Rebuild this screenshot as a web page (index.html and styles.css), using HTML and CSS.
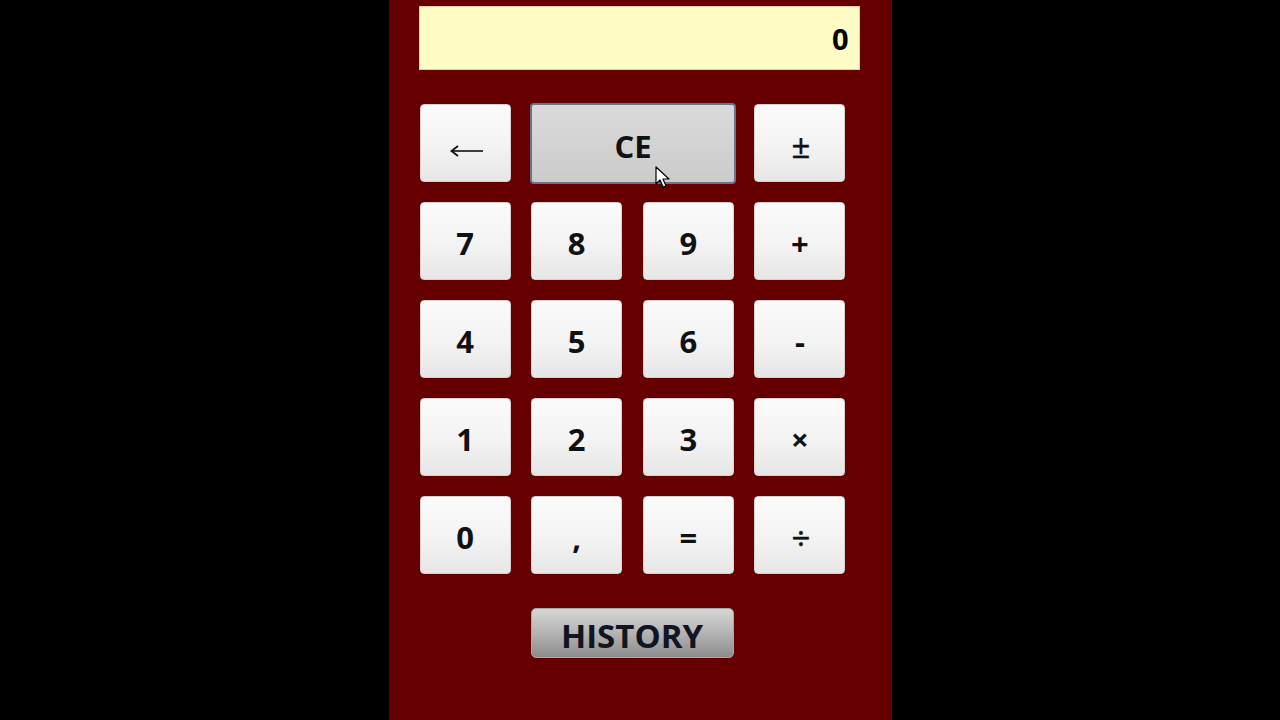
FILE: index.html
```html
<!DOCTYPE html>
<html lang="en">
<head>
    <meta charset="UTF-8">
    <meta name="viewport" content="width=device-width, initial-scale=1.0">
    <title>Calculator</title>
    <link rel="stylesheet" href="styles.css">
</head>
<body>

    <!-- Calculator Panel -->
    <div class="calc">
        <!-- Display -->
        <div class="display" id="display">0</div>

        <!-- Keypad -->
        <div class="keypad">
            <button class="key key-arrow" aria-label="Backspace">
                <svg width="34" height="12" viewBox="0 0 34 12">
                    <path d="M2 6 H33" stroke="#111" stroke-width="1.6"/>
                    <path d="M8 1 L1.5 6 L8 11" fill="none" stroke="#111" stroke-width="1.8" stroke-linejoin="miter"/>
                </svg>
            </button>
            <button class="key key-wide hover">CE
                <svg class="cursor" width="16" height="24" viewBox="0 0 16 24">
                    <path d="M1 1 L1 18 L5 14 L8 21 L11 20 L8 13 L14 13 Z" fill="#fff" stroke="#000" stroke-width="1.2" stroke-linejoin="round"/>
                </svg>
            </button>
            <button class="key key-sym">&plusmn;</button>

            <button class="key">7</button>
            <button class="key">8</button>
            <button class="key">9</button>
            <button class="key">+</button>

            <button class="key">4</button>
            <button class="key">5</button>
            <button class="key">6</button>
            <button class="key">-</button>

            <button class="key">1</button>
            <button class="key">2</button>
            <button class="key">3</button>
            <button class="key">&times;</button>

            <button class="key">0</button>
            <button class="key">,</button>
            <button class="key">=</button>
            <button class="key key-sym">&divide;</button>
        </div>

        <!-- History Button -->
        <div class="history-row">
            <button class="history-btn">HISTORY</button>
        </div>
    </div>

</body>
</html>
```

FILE: styles.css
```css
/* Page */
body {
    margin: 0;
    background-color: #000;
    display: flex;
    justify-content: center;
    height: 720px;
    overflow: hidden;
    font-family: "Open Sans", "Noto Sans", Arial, sans-serif;
}

/* Calculator Panel */
.calc {
    width: 503px;
    height: 720px;
    box-sizing: border-box;
    background-color: #660000;
    padding: 6px 0 0 30px;
}

/* Display */
.display {
    width: 441px;
    height: 64px;
    box-sizing: border-box;
    background-color: #fffcc6;
    border: 1px solid #e8c8b8;
    text-align: right;
    padding-right: 10px;
    font-size: 29px;
    font-weight: bold;
    line-height: 64px;
    color: #000;
}

/* Keypad */
.keypad {
    display: grid;
    grid-template-columns: repeat(4, 91px);
    grid-auto-rows: 78px;
    column-gap: 20.67px;
    row-gap: 20px;
    margin-top: 34px;
    margin-left: 1px;
}

.key {
    position: relative;
    border: 1px solid #d8d0d0;
    border-radius: 4px;
    background: linear-gradient(to bottom, #fbfbfb 0%, #f3f3f3 55%, #e6e6e6 100%);
    font-family: inherit;
    font-size: 31px;
    font-weight: bold;
    color: #111;
    padding: 4px 0 0;
    cursor: pointer;
}

.key-wide {
    grid-column: span 2;
}

.key-arrow {
    padding: 4px 0 0 3px;
}

.key-sym {
    font-weight: normal;
    font-size: 33px;
    padding-left: 2px;
    -webkit-text-stroke: 0.4px #111;
}

.key.hover {
    margin: -1px -2px -2px -1px;
    border: 2px solid #6a7488;
    background: linear-gradient(to bottom, #dadada 0%, #d3d3d3 50%, #cbcbcb 100%);
}

/* Mouse pointer resting on the CE key */
.cursor {
    position: absolute;
    left: 123px;
    top: 61px;
}

/* History Button */
.history-row {
    width: 441px;
    display: flex;
    padding-left: 112px;
    box-sizing: border-box;
    margin-top: 34px;
}

.history-btn {
    width: 203px;
    height: 50px;
    border: 1px solid #a8a8a8;
    border-radius: 5px;
    background: linear-gradient(to bottom, #d6d6d6 0%, #b4b4b4 50%, #8c8c8c 100%);
    font-family: inherit;
    font-size: 33px;
    font-weight: bold;
    line-height: 1;
    color: #111522;
    padding: 4px 0 0;
    cursor: pointer;
}
```
